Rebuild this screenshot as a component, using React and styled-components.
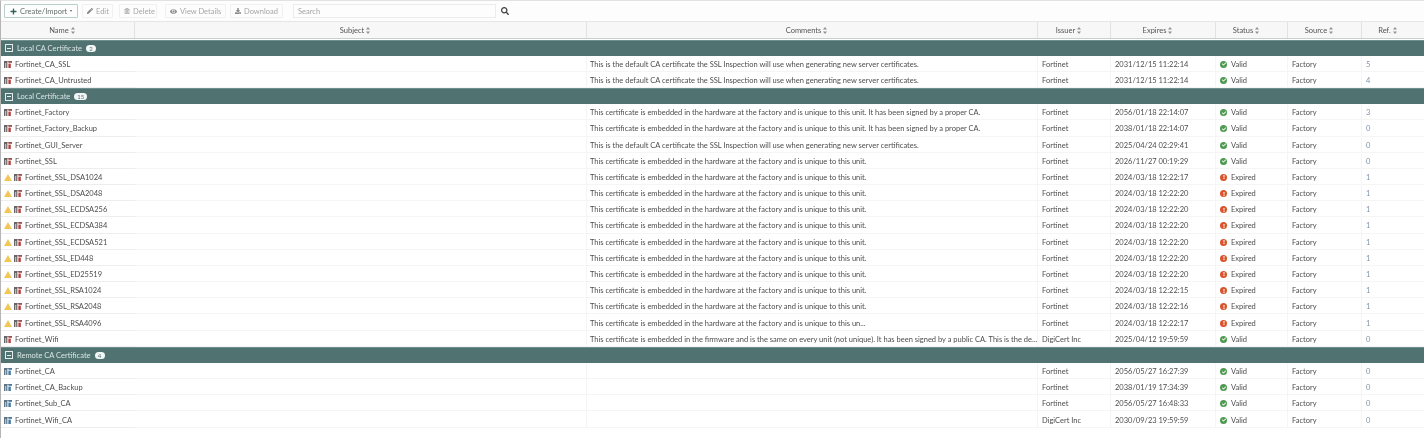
import React from "react";
import styled, { createGlobalStyle } from "styled-components";
import { FaPlus, FaPen, FaRegTrashAlt, FaEye, FaDownload, FaSearch, FaCheck, FaExclamation } from "react-icons/fa";

const Global = createGlobalStyle`
  html, body { margin: 0; padding: 0; background: #fff; }
  body { font-family: Lato, "Liberation Sans", sans-serif; font-size: 7.5px; color: #4a4a4a; overflow: hidden; }
`;

const COLS = "134px 452px 451px 73px 105px 72px 74px 62px";

const Page = styled.div`
  width: 1424px;
  height: 438px;
  box-sizing: border-box;
  border-left: 1px solid #b5b5b5;
  border-top: 1px solid #e2e2e2;
  overflow: hidden;
  background: #fff;
  filter: blur(0.3px);
`;
const Toolbar = styled.div`
  height: 20px;
  display: flex;
  align-items: center;
  padding-left: 3px;
  background: #fdfdfd;
`;
const Btn = styled.div`
  height: 14px;
  box-sizing: border-box;
  display: flex;
  align-items: center;
  gap: 3px;
  margin-left: ${p => p.$ml || 0}px;
  padding: 0 0 0 ${p => (p.$primary ? "5px" : "4px")};
  border: 1px solid ${p => (p.$primary ? "#b9cfcb" : "#f0f0f0")};
  border-radius: 1px;
  color: ${p => (p.$primary ? "#66726f" : "#a6a6a6")};
  font-size: 7.5px;
  white-space: nowrap;
  width: ${p => p.$w}px;
  svg { flex: none; color: ${p => (p.$primary ? "#2f5f56" : "#8a8a8a")}; }
`;
const Caret = styled.span`
  width: 0;
  height: 0;
  border-left: 1.5px solid transparent;
  border-right: 1.5px solid transparent;
  border-top: 2px solid #55635f;
`;
const SearchBox = styled.div`
  width: 203px;
  height: 14px;
  box-sizing: border-box;
  margin-left: 10px;
  padding-left: 4px;
  display: flex;
  align-items: center;
  border: 1px solid #ececec;
  color: #a4a4a4;
  font-size: 7.5px;
`;
const SearchIcon = styled.span`
  margin-left: 2px;
  width: 14px;
  display: flex;
  justify-content: center;
  color: #3f3f3f;
`;
const HeaderRow = styled.div`
  display: grid;
  grid-template-columns: ${COLS};
  height: 18px;
  box-sizing: border-box;
  background: #f7f7f7;
  border-top: 1px solid #e6e6e6;
  border-bottom: 1px solid #c8d0ce;
`;
const HeadCell = styled.div`
  display: flex;
  align-items: center;
  justify-content: center;
  gap: 2px;
  padding-right: 11px;
  color: #555;
  font-size: 7.5px;
  border-right: 1px solid #e2e2e2;
  &:last-child { border-right: 0; }
`;
const Group = styled.div`
  height: 16.18px;
  box-sizing: border-box;
  display: flex;
  align-items: center;
  padding-left: 4px;
  background: #507372;
  border-top: 1px solid #6f8f8c;
  color: #d9e4e3;
  font-size: 7.5px;
`;
const Toggle = styled.span`
  width: 8px;
  height: 8px;
  box-sizing: border-box;
  border: 1px solid #e4ecec;
  margin-right: 4px;
  display: flex;
  align-items: center;
  justify-content: center;
  &::after { content: ""; width: 4px; height: 1px; background: #e4ecec; }
`;
const Count = styled.span`
  margin-left: 4px;
  padding: 0 3px;
  min-width: 4px;
  height: 7px;
  line-height: 7px;
  border-radius: 4px;
  background: #f2f6f6;
  color: #507372;
  font-size: 6px;
  text-align: center;
`;
const Body = styled.div`
  padding-top: 0.5px;
`;
const Row = styled.div`
  display: grid;
  grid-template-columns: ${COLS};
  height: 16.18px;
  align-items: center;
  box-sizing: border-box;
  background: #fff;
`;
const Cell = styled.div`
  height: 100%;
  box-sizing: border-box;
  display: flex;
  align-items: center;
  gap: 3px;
  padding: 2px 0 0 ${p => p.$pad ?? 4}px;
  white-space: nowrap;
  overflow: hidden;
  color: ${p => p.$color || "#4d4d4d"};
  font-size: 7.5px;
  border-bottom: 1px solid #f5f5f5;
  border-right: ${p => (p.$line ? "1px solid #f5f5f5" : "0")};
`;
const NameCell = styled(Cell)`
  padding-left: 3px;
  gap: 2px;
  border-bottom-color: #eeeeee;
`;
const NameText = styled.span`
  margin-left: 1px;
`;
const StatusDot = styled.span`
  width: 7px;
  height: 7px;
  border-radius: 50%;
  background: ${p => p.$bg};
  color: #fff;
  display: flex;
  align-items: center;
  justify-content: center;
  font-size: 4px;
  margin-right: 1px;
`;

const Sort = () => (
  <svg width="4" height="7" viewBox="0 0 4 7"><path d="M2 0 L4 2.6 H0Z M2 7 L0 4.4 H4Z" fill="#8d9594" /></svg>
);
const Warn = () => (
  <svg width="8" height="7" viewBox="0 0 8 7"><path d="M4 0 L8 7 H0Z" fill="#f1c75a" /></svg>
);
const Logo = ({ c = "#b5403c", g = "#666" }) => (
  <svg width="8" height="7" viewBox="0 0 8 7">
    <rect x="0" y="0" width="3.4" height="7" fill={g} />
    <rect x="4.4" y="0" width="3.6" height="1.8" fill={c} />
    <rect x="4.4" y="2.6" width="2.4" height="4.4" fill={c} />
    <rect x="0" y="0" width="8" height="1" fill={g} opacity=".55" />
    <rect x="1.2" y="2" width="1" height="5" fill="#fff" opacity=".7" />
  </svg>
);

const H = ({ children }) => <HeadCell>{children}<Sort /></HeadCell>;

const C1 = "This is the default CA certificate the SSL Inspection will use when generating new server certificates.";
const F = "This certificate is embedded in the hardware at the factory and is unique to this unit. It has been signed by a proper CA.";
const U = "This certificate is embedded in the hardware at the factory and is unique to this unit.";

const sections = [
  { title: "Local CA Certificate", count: 2, rows: [
    ["Fortinet_CA_SSL", C1, "Fortinet", "2031/12/15 11:22:14", 1, 5],
    ["Fortinet_CA_Untrusted", C1, "Fortinet", "2031/12/15 11:22:14", 1, 4],
  ]},
  { title: "Local Certificate", count: 15, rows: [
    ["Fortinet_Factory", F, "Fortinet", "2056/01/18 22:14:07", 1, 3],
    ["Fortinet_Factory_Backup", F, "Fortinet", "2038/01/18 22:14:07", 1, 0],
    ["Fortinet_GUI_Server", C1, "Fortinet", "2025/04/24 02:29:41", 1, 0],
    ["Fortinet_SSL", U, "Fortinet", "2026/11/27 00:19:29", 1, 0],
    ["Fortinet_SSL_DSA1024", U, "Fortinet", "2024/03/18 12:22:17", 0, 1],
    ["Fortinet_SSL_DSA2048", U, "Fortinet", "2024/03/18 12:22:20", 0, 1],
    ["Fortinet_SSL_ECDSA256", U, "Fortinet", "2024/03/18 12:22:20", 0, 1],
    ["Fortinet_SSL_ECDSA384", U, "Fortinet", "2024/03/18 12:22:20", 0, 1],
    ["Fortinet_SSL_ECDSA521", U, "Fortinet", "2024/03/18 12:22:20", 0, 1],
    ["Fortinet_SSL_ED448", U, "Fortinet", "2024/03/18 12:22:20", 0, 1],
    ["Fortinet_SSL_ED25519", U, "Fortinet", "2024/03/18 12:22:20", 0, 1],
    ["Fortinet_SSL_RSA1024", U, "Fortinet", "2024/03/18 12:22:15", 0, 1],
    ["Fortinet_SSL_RSA2048", U, "Fortinet", "2024/03/18 12:22:16", 0, 1],
    ["Fortinet_SSL_RSA4096", "This certificate is embedded in the hardware at the factory and is unique to this un...", "Fortinet", "2024/03/18 12:22:17", 0, 1],
    ["Fortinet_Wifi", "This certificate is embedded in the firmware and is the same on every unit (not unique). It has been signed by a public CA. This is the de...", "DigiCert Inc", "2025/04/12 19:59:59", 1, 0],
  ]},
  { title: "Remote CA Certificate", count: 4, remote: true, rows: [
    ["Fortinet_CA", "", "Fortinet", "2056/05/27 16:27:39", 1, 0],
    ["Fortinet_CA_Backup", "", "Fortinet", "2038/01/19 17:34:39", 1, 0],
    ["Fortinet_Sub_CA", "", "Fortinet", "2056/05/27 16:48:33", 1, 0],
    ["Fortinet_Wifi_CA", "", "DigiCert Inc", "2030/09/23 19:59:59", 1, 0],
  ]},
];

export default function App() {
  return (
    <Page>
      <Global />
      <Toolbar>
        <Btn $primary $w={74}><FaPlus size={7} />Create/Import<Caret /></Btn>
        <Btn $w={31} $ml={4}><FaPen size={6} />Edit</Btn>
        <Btn $w={38} $ml={6}><FaRegTrashAlt size={6} />Delete</Btn>
        <Btn $w={61} $ml={8}><FaEye size={7} />View Details</Btn>
        <Btn $w={53} $ml={4}><FaDownload size={6} />Download</Btn>
        <SearchBox>Search</SearchBox>
        <SearchIcon><FaSearch size={8} /></SearchIcon>
      </Toolbar>
      <HeaderRow>
        <H>Name</H><H>Subject</H><H>Comments</H><H>Issuer</H><H>Expires</H><H>Status</H><H>Source</H><H>Ref.</H>
      </HeaderRow>
      <Body>
        {sections.map(s => (
          <React.Fragment key={s.title}>
            <Group>
              <Toggle />
              {s.title}
              <Count>{s.count}</Count>
            </Group>
            {s.rows.map(r => (
              <Row key={r[0]}>
                <NameCell>
                  {r[4] === 0 && <Warn />}
                  {s.remote ? <Logo c="#3f79a6" g="#5f7484" /> : <Logo />}
                  <NameText>{r[0]}</NameText>
                </NameCell>
                <Cell $line />
                <Cell $line $pad={3}>{r[1]}</Cell>
                <Cell $line>{r[2]}</Cell>
                <Cell $line>{r[3]}</Cell>
                <Cell $line>
                  <StatusDot $bg={r[4] ? "#4e9a51" : "#d9542b"}>{r[4] ? <FaCheck /> : <FaExclamation />}</StatusDot>
                  {r[4] ? "Valid" : "Expired"}
                </Cell>
                <Cell $line>Factory</Cell>
                <Cell $color="#8193a6">{r[5]}</Cell>
              </Row>
            ))}
          </React.Fragment>
        ))}
      </Body>
    </Page>
  );
}
